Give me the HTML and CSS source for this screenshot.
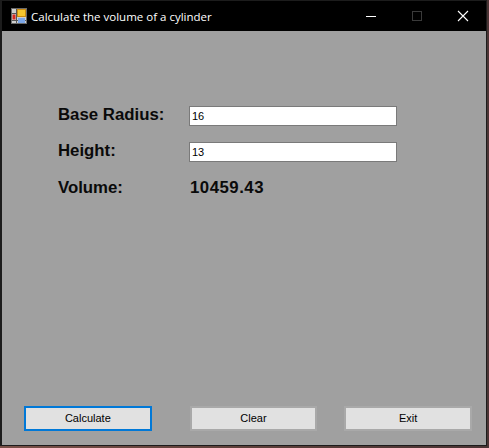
FILE: index.html
```html
<!DOCTYPE html>
<html lang="en">
<head>
<meta charset="utf-8">
<title>Calculate the volume of a cylinder</title>
<link rel="stylesheet" href="styles.css">
</head>
<body>
<div class="window">
  <header class="titlebar">
    <svg class="app-icon" width="16" height="16" viewBox="0 0 16 16">
      <rect x="0" y="0" width="16" height="16" fill="#cfcfcf"/>
      <path d="M0 5.500H5M5.500 0V16M0 12.500H16" stroke="#555" stroke-width="1" fill="none"/>
      <rect x="0.500" y="0.500" width="15" height="15" fill="none" stroke="#6a6a6a"/>
      <rect x="6.500" y="1.500" width="8" height="7" fill="#f5c52e" stroke="#c98a10"/>
      <rect x="1.500" y="6.500" width="3" height="5" fill="#d8271f"/>
      <rect x="7" y="10" width="7" height="5" fill="#7ba6e8"/>
    </svg>
    <span class="title">Calculate the volume of a cylinder</span>
    <div class="controls">
      <span class="control"><svg width="12" height="12" viewBox="0 0 12 12"><path d="M1 6.500H11" stroke="#fff"/></svg></span>
      <span class="control"><svg width="12" height="12" viewBox="0 0 12 12"><rect x="1.500" y="1.500" width="9" height="9" fill="none" stroke="#3a3a3a"/></svg></span>
      <span class="control"><svg width="12" height="12" viewBox="0 0 12 12"><path d="M1 1L11 11M11 1L1 11" stroke="#fff" stroke-width="1.100"/></svg></span>
    </div>
  </header>
  <main class="client">
    <div class="form">
      <label class="label">Base Radius:</label>
      <input class="field" type="text" value="16">
      <label class="label">Height:</label>
      <input class="field" type="text" value="13">
      <span class="label result">Volume:</span>
      <span class="label result value">10459.43</span>
    </div>
    <div class="actions">
      <button class="btn btn-focus">Calculate</button>
      <button class="btn btn-clear">Clear</button>
      <button class="btn">Exit</button>
    </div>
  </main>
</div>
</body>
</html>
```
FILE: styles.css
```css
* { box-sizing: border-box; }
html, body { margin: 0; height: 100%; }
body {
  width: 489px;
  height: 448px;
  overflow: hidden;
  background: linear-gradient(90deg, #7a5048, #5e403a 50%, #4a3434);
}
.window {
  width: 487px;
  height: 446px;
  background: #1a1a1a;
  border: 1px solid #1c1c1c;
  border-left-width: 2px;
  display: flex;
  flex-direction: column;
}
.titlebar {
  height: 30px;
  background: #000;
  display: flex;
  align-items: center;
  padding-left: 9px;
  color: #fff;
  font: 11.5px "Open Sans", sans-serif;
  flex: none;
}
.app-icon { flex: none; margin-right: 4px; }
.title { flex: 1; white-space: nowrap; }
.controls { display: flex; height: 100%; }
.control {
  width: 46px;
  display: flex;
  align-items: center;
  justify-content: center;
}
.client {
  flex: 1;
  background: #a0a0a0;
  display: flex;
  flex-direction: column;
  justify-content: space-between;
  padding: 75px 14px 14px 22px;
}
.form {
  display: grid;
  grid-template-columns: 131px 208px;
  grid-auto-rows: 20px;
  row-gap: 16px;
  align-items: center;
  padding-left: 34px;
}
.label {
  font: bold 16.800px/18px "Liberation Sans", sans-serif;
  color: #0a0a0a;
  white-space: nowrap;
  margin-top: -2px;
}
.result { margin-top: 0; }
.value { letter-spacing: 0.500px; padding-left: 1px; }
.field {
  width: 208px;
  height: 20px;
  border: 1px solid #7a7a7a;
  background: #fff;
  padding: 0 2px;
  font: 11px "Liberation Sans", sans-serif;
  color: #000;
  outline: none;
}
.actions { display: flex; }
.btn {
  width: 128px;
  height: 25px;
  background: #e1e1e1;
  border: 2px solid #a9a9a9;
  font: 11px/21px "Liberation Sans", sans-serif;
  color: #000;
  padding: 0;
}
.btn-focus { border-color: #0078d7; }
.btn-clear { margin: 0 27px 0 38px; }
```
